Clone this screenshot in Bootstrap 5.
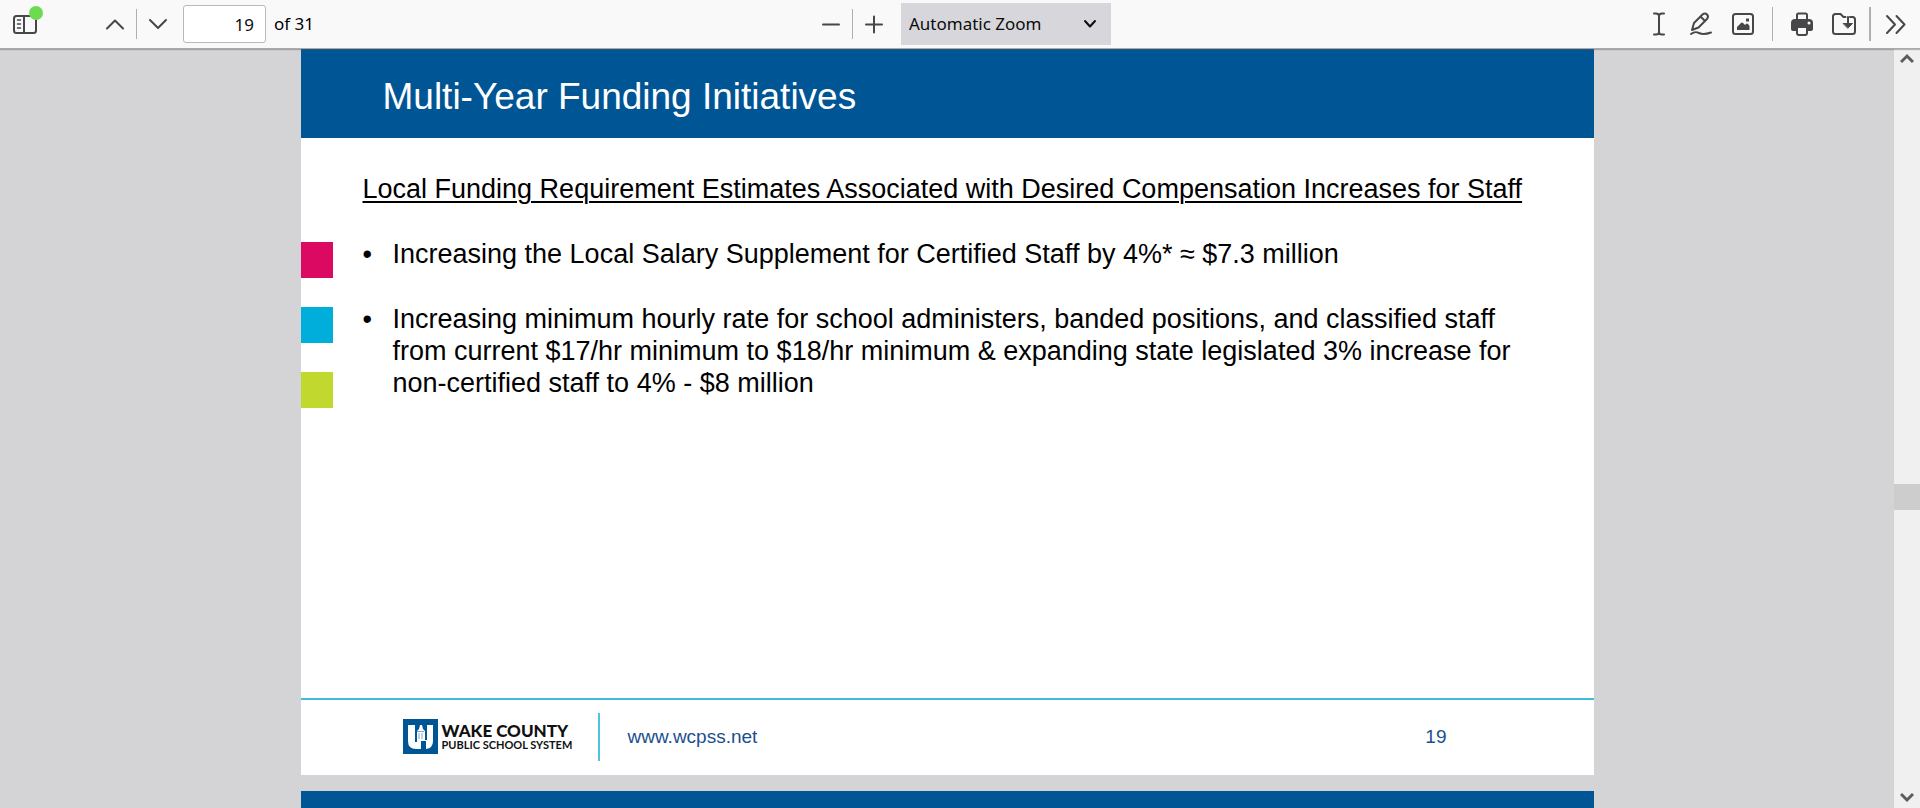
<!DOCTYPE html>
<html lang="en">
<head>
<meta charset="utf-8">
<meta name="viewport" content="width=device-width, initial-scale=1">
<title>Multi-Year Funding Initiatives</title>
<link href="https://cdn.jsdelivr.net/npm/bootstrap@5.3.0/dist/css/bootstrap.min.css" rel="stylesheet">
<style>
  :root { --brand: #005595; --sky: #00aedb; }
  body { background: #d4d4d7; font-family: "Liberation Sans", Arial, sans-serif; color: #000; }

  /* Toolbar */
  .toolbar { display: grid; grid-template-columns: 1fr auto 1fr; height: 48px; padding: 0 3px 0 4px; background: #f9f9fa;
    font-family: "Noto Sans", "Open Sans", sans-serif; font-size: 17px; position: relative; z-index: 2;
    box-shadow: 0 1px 0 #a9aaab, 0 2px 1px rgba(90, 90, 90, .4); }
  .tool { width: 42px; height: 42px; padding: 0; border: 0; border-radius: 0; color: #47474a; display: flex; align-items: center; justify-content: center; position: relative; }
  .tool svg { width: 26px; height: 26px; fill: none; stroke: currentColor; stroke-width: 2; stroke-linecap: round; stroke-linejoin: round; }
  .notice { position: absolute; top: 3px; right: 3px; width: 14px; height: 14px; border-radius: 50%; background: #6ddb50; }
  .sep { width: 1px; height: 30px; background: #b0b0b2; }
  .sep-tall { height: 34px; }
  .sep-thick { width: 2px; }
  .page-box { width: 83px; height: 38px; padding: 0 11px; border: 1px solid #b9b9bb; border-radius: 3px; font-size: inherit; color: #0c0c0d; text-align: right; }
  .zoom-box { width: 210px; height: 42px; margin-left: 6px; padding: 0 8px; border: 0; border-radius: 0; color: #0c0c0d; font-size: inherit; line-height: 42px;
    background: #d7d7db url("data:image/svg+xml,%3Csvg xmlns='http://www.w3.org/2000/svg' viewBox='0 0 14 14'%3E%3Cpath d='M2 4l5 5.500 5-5.500' fill='none' stroke='%230c0c0d' stroke-width='2' stroke-linecap='round' stroke-linejoin='round'/%3E%3C/svg%3E") no-repeat right 14px center / 14px 14px; }

  /* Slides */
  .slide { width: 100%; max-width: 1293px; aspect-ratio: 16 / 9; background: #fff; }
  .slide-head { height: 90px; padding: 8px 82px 0; background: var(--brand); color: #fff; }
  .slide-head h1 { font-size: 37px; font-weight: 400; line-height: 40px; }
  .slide-rail { width: 32px; padding-top: 104px; gap: 29px; }
  .chip { height: 36px; }
  .chip-pink { background: #dc0963; }
  .chip-blue { background: var(--sky); }
  .chip-lime { background: #c1d82f; }
  .slide-copy { padding: 35px 60px 0 30px; font-size: 27px; line-height: 32px; }
  .slide-copy h2 { font-size: inherit; font-weight: 400; line-height: inherit; text-decoration: underline; text-decoration-thickness: 2px; text-underline-offset: 3px; margin-bottom: 33px; }
  .slide-copy li { display: flex; margin-bottom: 33px; }
  .slide-copy li::before { content: "•"; flex: 0 0 30px; }
  .slide-foot { height: 77px; border-top: 2px solid #3ebcd9; padding: 0 147px 2px 102px; color: #1c4f8f; font-size: 19px; }
  .slide-foot a { color: inherit; }
  .foot-line { width: 2px; height: 48px; background: #4fc4df; margin: 0 28px 0 27px; }
  .crest { width: 35px; height: 35px; }
  .brand-name { font-family: Lato, sans-serif; font-weight: 900; color: #111; font-size: 17px; line-height: 16px; width: 129px; white-space: nowrap; }
  .brand-sub { font-size: 11px; line-height: 11px; font-weight: 700; }

  /* Scroll track */
  .track { width: 26px; background: #f0f0f0; }
  .track svg { width: 14px; height: 12px; fill: none; stroke: #5c5c5c; stroke-width: 3; }
  .thumb { height: 26px; background: #cdcdcd; }
  .track-above { flex: 413 1 0; }
  .track-below { flex: 277 1 0; }
</style>
</head>
<body class="vh-100 d-flex flex-column overflow-hidden">

<header class="toolbar flex-shrink-0">
  <div class="d-flex align-items-center">
    <button class="btn tool" type="button" aria-label="Toggle sidebar">
      <svg viewBox="0 0 26 26"><rect x="2" y="5" width="22" height="17" rx="2.500"/><path d="M12 5v17"/><path d="M5.500 9h3M5.500 13h3M5.500 17h3" stroke-width="1.500"/></svg>
      <span class="notice"></span>
    </button>
    <button class="btn tool ms-5" type="button" aria-label="Previous page"><svg viewBox="0 0 26 26"><path d="M5 17.500l8-8 8 8"/></svg></button>
    <span class="sep"></span>
    <button class="btn tool" type="button" aria-label="Next page"><svg viewBox="0 0 26 26"><path d="M5 9l8 8 8-8"/></svg></button>
    <input class="page-box ms-1" id="page" type="text" value="19">
    <label class="ms-2" for="page">of 31</label>
  </div>
  <div class="d-flex align-items-center">
    <button class="btn tool" type="button" aria-label="Zoom out"><svg viewBox="0 0 26 26"><path d="M5 13.500h16"/></svg></button>
    <span class="sep"></span>
    <button class="btn tool" type="button" aria-label="Zoom in"><svg viewBox="0 0 26 26"><path d="M5 13.500h16M13 5.500v16"/></svg></button>
    <select class="form-select zoom-box" aria-label="Zoom"><option>Automatic Zoom</option><option>Actual Size</option><option>Page Fit</option></select>
  </div>
  <div class="d-flex align-items-center justify-content-end">
    <button class="btn tool" type="button" aria-label="Text"><svg viewBox="0 0 26 26"><path d="M8 2.500h2c2 0 3 1 3 2.500 0-1.500 1-2.500 3-2.500h2M8 23.500h2c2 0 3-1 3-2.500 0 1.500 1 2.500 3 2.500h2M13 5v16"/></svg></button>
    <button class="btn tool" type="button" aria-label="Draw"><svg viewBox="0 0 26 26"><path d="M4 19l2-7L14.500 3.500q2.500-2 4.500 0t0 4.500L10.500 16.500 4 19zM12.500 5.500l4.500 4.500"/><path d="M3 23c4-3 6-2 8-1s5 2 12-.500"/></svg></button>
    <button class="btn tool" type="button" aria-label="Add image"><svg viewBox="0 0 26 26"><rect x="3" y="3" width="20" height="20" rx="2.500"/><path fill="currentColor" stroke="none" d="M7 19v-3l4-4q1-1 2 0l2 2 1-1q1-1 2 0l1.500 2v3.500q0 .500-.500.500zM16 7.500h3v3h-3z"/></svg></button>
    <span class="sep sep-tall mx-2"></span>
    <button class="btn tool" type="button" aria-label="Print"><svg viewBox="0 0 26 26"><path d="M8 9V4q0-1.500 1.500-1.500h7Q18 2.500 18 4v5"/><path fill="currentColor" stroke="none" d="M6 8h14q4 0 4 4v6q0 2-2 2H4q-2 0-2-2v-6q0-4 4-4z"/><path fill="#f9f9fa" d="M8 16h10v6q0 2-2 2h-6q-2 0-2-2z"/><circle cx="20" cy="12" r="1.500" fill="#f9f9fa" stroke="none"/></svg></button>
    <button class="btn tool" type="button" aria-label="Save"><svg viewBox="0 0 26 26"><path d="M19 6h2.500Q24 6 24 8.500v12q0 2.500-2.500 2.500h-17Q2 23 2 20.500v-15Q2 3 4.500 3h5l3 3h2M17 6v8"/><path fill="currentColor" stroke-width="1" d="M12.500 12.500h9L17 17z"/></svg></button>
    <span class="sep sep-tall sep-thick mx-1"></span>
    <button class="btn tool" type="button" aria-label="More tools"><svg viewBox="0 0 26 26"><path d="M4 5l8 8.500L4 22M13.500 5l8 8.500-8 8.500"/></svg></button>
  </div>
</header>

<div class="d-flex flex-grow-1 overflow-hidden">
  <main class="flex-grow-1 d-flex flex-column align-items-center gap-3 overflow-hidden">
    <article class="slide flex-shrink-0 d-flex flex-column">
      <div class="slide-head d-flex align-items-center"><h1 class="m-0">Multi-Year Funding Initiatives</h1></div>
      <div class="d-flex flex-grow-1">
        <div class="slide-rail d-flex flex-column flex-shrink-0">
          <span class="chip chip-pink"></span><span class="chip chip-blue"></span><span class="chip chip-lime"></span>
        </div>
        <div class="slide-copy">
          <h2>Local Funding Requirement Estimates Associated with Desired Compensation Increases for Staff</h2>
          <ul class="list-unstyled m-0">
            <li>Increasing the Local Salary Supplement for Certified Staff by 4%* ≈ $7.3 million</li>
            <li>Increasing minimum hourly rate for school administers, banded positions, and classified staff from current $17/hr minimum to $18/hr minimum &amp; expanding state legislated 3% increase for non-certified staff to 4% - $8 million</li>
          </ul>
        </div>
      </div>
      <footer class="slide-foot d-flex align-items-center">
        <svg class="crest me-1" viewBox="0 0 35 35" aria-hidden="true"><path fill="#005595" d="M0 0h35v35H0z"/><path fill="#fff" d="M5 6h7v17h2V12l2-2 1-4h2l1 4 2 2v9h2V6h6v16q0 7-7 8v-8h-5v8h-5q-8 0-8-8z"/><path d="M14 12.500h7M16 14v6M19 14v6" stroke="#7fa9ca" stroke-width="1"/></svg>
        <div class="brand-name">WAKE COUNTY<div class="brand-sub">PUBLIC SCHOOL SYSTEM</div></div>
        <span class="foot-line"></span>
        <a class="text-decoration-none" href="#">www.wcpss.net</a>
        <span class="ms-auto">19</span>
      </footer>
    </article>
    <article class="slide flex-shrink-0"><div class="slide-head"></div></article>
  </main>
  <div class="track d-flex flex-column align-items-center flex-shrink-0 py-1" aria-hidden="true">
    <svg viewBox="0 0 14 12"><path d="M1 10l6-6 6 6"/></svg>
    <span class="track-above"></span>
    <span class="thumb w-100"></span>
    <span class="track-below"></span>
    <svg viewBox="0 0 14 12"><path d="M1 2l6 6 6-6"/></svg>
  </div>
</div>

<script src="https://cdn.jsdelivr.net/npm/bootstrap@5.3.0/dist/js/bootstrap.bundle.min.js"></script>
</body>
</html>
